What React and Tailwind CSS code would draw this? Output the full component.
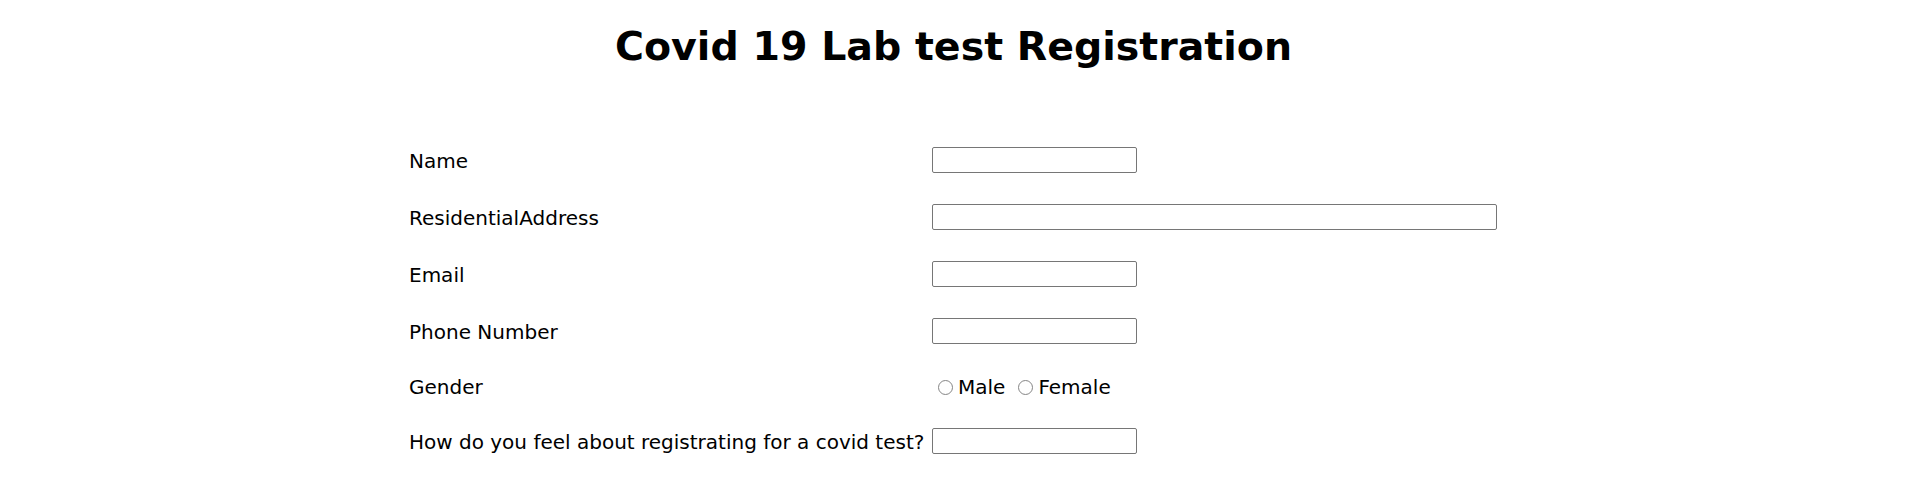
const fields = [
  { label: 'Name', width: 'w-[205px]' },
  { label: 'ResidentialAddress', width: 'w-[565px]' },
  { label: 'Email', width: 'w-[205px]' },
  { label: 'Phone Number', width: 'w-[205px]' },
]

function TextInput({ width }) {
  return (
    <input
      type="text"
      className={`${width} h-[26px] border border-[#767676] rounded-[2px] bg-white outline-none`}
    />
  )
}

function Radio({ label, name }) {
  return (
    <label className="flex items-center">
      <input
        type="radio"
        name={name}
        className="appearance-none w-[15px] h-[15px] rounded-full border border-[#858585] bg-white ml-[6px] mr-[5px]"
      />
      <span>{label}</span>
    </label>
  )
}

export default function App() {
  return (
    <div className="min-h-screen bg-white text-black font-['DejaVu_Sans',Verdana,sans-serif]">
      <h1 className="pt-[23px] pr-[7px] text-center text-[39.5px] font-bold leading-[47px]">
        Covid 19 Lab test Registration
      </h1>

      <form className="mx-auto mt-[77px] w-[1096px] grid grid-cols-[523px_573px] gap-y-[31px] text-[20px] leading-[22px]">
        {fields.map(f => (
          <div key={f.label} className="contents">
            <div className="flex items-center whitespace-nowrap pt-[2px]">{f.label}</div>
            <div className="flex items-center">
              <TextInput width={f.width} />
            </div>
          </div>
        ))}

        <div className="flex items-center h-[22px] pt-[2px]">Gender</div>
        <div className="flex items-center h-[22px] gap-[7px] pt-[2px]">
          <Radio name="gender" label="Male" />
          <Radio name="gender" label="Female" />
        </div>

        <div className="flex items-center whitespace-nowrap pt-[2px]">How do you feel about registrating for a covid test?</div>
        <div className="flex items-center">
          <TextInput width="w-[205px]" />
        </div>
      </form>
    </div>
  )
}
